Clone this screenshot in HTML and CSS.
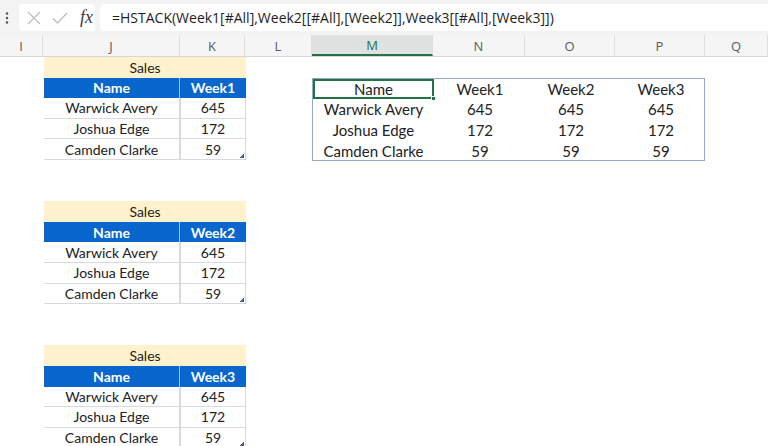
FILE: index.html
```html
<!DOCTYPE html>
<html lang="en">

<head>
    <meta charset="UTF-8">
    <meta name="viewport" content="width=device-width, initial-scale=1.0">
    <title>HSTACK</title>

    <link rel="stylesheet" href="styles.css">
</head>

<body>
    <div class="toolbar">
        <svg class="dots" viewBox="0 0 4 12" width="4" height="12">
            <circle cx="2" cy="1.5" r="1.2" />
            <circle cx="2" cy="6" r="1.2" />
            <circle cx="2" cy="10.5" r="1.2" />
        </svg>
        <div class="fx-box">
            <svg class="icon" viewBox="0 0 16 16" width="16" height="16">
                <path d="M2 2 L14 14 M14 2 L2 14" />
            </svg>
            <svg class="icon" viewBox="0 0 16 16" width="16" height="16">
                <path d="M1 8.5 L5.5 13 L15 3" />
            </svg>
            <span class="fx">fx</span>
        </div>
        <div class="formula">=HSTACK(Week1[#All],Week2[[#All],[Week2]],Week3[[#All],[Week3]])</div>
    </div>

    <div class="col-heads">
        <div class="col-head">I</div>
        <div class="col-head">J</div>
        <div class="col-head">K</div>
        <div class="col-head">L</div>
        <div class="col-head active">M</div>
        <div class="col-head">N</div>
        <div class="col-head">O</div>
        <div class="col-head">P</div>
        <div class="col-head">Q</div>
    </div>

    <div class="sheet">
        <div class="table table-1">
            <div class="cell title">Sales</div>
            <div class="cell head">Name</div>
            <div class="cell head">Week1</div>
            <div class="cell">Warwick Avery</div>
            <div class="cell">645</div>
            <div class="cell">Joshua Edge</div>
            <div class="cell">172</div>
            <div class="cell">Camden Clarke</div>
            <div class="cell">59</div>
            <span class="resize"></span>
        </div>

        <div class="table table-2">
            <div class="cell title">Sales</div>
            <div class="cell head">Name</div>
            <div class="cell head">Week2</div>
            <div class="cell">Warwick Avery</div>
            <div class="cell">645</div>
            <div class="cell">Joshua Edge</div>
            <div class="cell">172</div>
            <div class="cell">Camden Clarke</div>
            <div class="cell">59</div>
            <span class="resize"></span>
        </div>

        <div class="table table-3">
            <div class="cell title">Sales</div>
            <div class="cell head">Name</div>
            <div class="cell head">Week3</div>
            <div class="cell">Warwick Avery</div>
            <div class="cell">645</div>
            <div class="cell">Joshua Edge</div>
            <div class="cell">172</div>
            <div class="cell">Camden Clarke</div>
            <div class="cell">59</div>
            <span class="resize"></span>
        </div>

        <div class="spill">
            <div class="val selected">Name<span class="handle"></span></div>
            <div class="val">Week1</div>
            <div class="val">Week2</div>
            <div class="val">Week3</div>
            <div class="val">Warwick Avery</div>
            <div class="val">645</div>
            <div class="val">645</div>
            <div class="val">645</div>
            <div class="val">Joshua Edge</div>
            <div class="val">172</div>
            <div class="val">172</div>
            <div class="val">172</div>
            <div class="val">Camden Clarke</div>
            <div class="val">59</div>
            <div class="val">59</div>
            <div class="val">59</div>
        </div>
    </div>
</body>

</html>
```

FILE: styles.css
```css
* {
    --green: rgb(33, 115, 70);
    --blue: rgb(8, 102, 204);
    --cols: 43px 137px 65px 67px 121px 92px 90px 90px 1fr;
    --row: 20.6px;
    box-sizing: border-box;
}

body {
    background-color: white;
    margin: 0;
    overflow: hidden;
    font-family: Lato, "Liberation Sans", sans-serif;
    color: rgb(34, 34, 34);
}

/* formula bar */

.toolbar {
    display: flex;
    align-items: center;
    height: 35px;
    padding: 4px 0 4px 5px;
    background-color: rgb(243, 243, 243);
}

.dots {
    fill: rgb(80, 80, 80);
    margin-right: 10px;
}

.fx-box {
    display: flex;
    align-items: center;
    gap: 10px;
    height: 27px;
    width: 76px;
    padding-left: 7px;
    background-color: white;
    border-radius: 4px;
    margin-right: 5px;
}

.icon {
    fill: none;
    stroke: rgb(190, 190, 190);
    stroke-width: 1.3;
}

.fx {
    font-family: "Liberation Serif", serif;
    font-style: italic;
    font-size: 18px;
    color: rgb(60, 60, 60);
    margin-left: 2px;
}

.formula {
    flex: 1;
    height: 27px;
    display: flex;
    align-items: center;
    padding-left: 12px;
    background-color: white;
    border-radius: 4px 0 0 4px;
    font-family: "Open Sans", sans-serif;
    font-size: 14px;
    color: rgb(30, 30, 30);
    white-space: nowrap;
}

/* column headers */

.col-heads {
    display: grid;
    grid-template-columns: var(--cols);
    height: 22px;
    background-color: rgb(245, 245, 245);
    border-bottom: 1px solid rgb(215, 215, 215);
}

.col-head {
    display: flex;
    align-items: center;
    justify-content: center;
    font-family: "Open Sans", sans-serif;
    font-size: 13px;
    color: rgb(90, 90, 90);
    border-right: 1px solid rgb(222, 222, 222);
}

.col-head.active {
    background-color: rgb(224, 226, 225);
    color: var(--green);
    border-bottom: 2px solid var(--green);
}

/* sheet */

.sheet {
    display: grid;
    grid-template-columns: var(--cols);
    grid-auto-rows: var(--row);
}

.table {
    position: relative;
    display: grid;
    grid-template-columns: 136px 66px;
    grid-auto-rows: var(--row);
    grid-column: 2 / span 2;
    grid-row-end: span 5;
    margin-left: 1px;
    font-size: 14px;
}

.table-1 {
    grid-row-start: 1;
}

.table-2 {
    grid-row-start: 8;
}

.table-3 {
    grid-row-start: 15;
}

.cell {
    display: flex;
    align-items: center;
    justify-content: center;
    border-right: 1px solid rgb(214, 218, 224);
    border-bottom: 1px solid rgb(214, 218, 224);
}

.cell:nth-child(odd) {
    border-left: 1px solid rgb(214, 218, 224);
}

.cell.title {
    grid-column: 1 / span 2;
    background-color: rgb(255, 242, 204);
    border: none;
}

.cell.head {
    background-color: var(--blue);
    color: white;
    font-weight: 700;
    border-left: none;
    border-bottom: none;
    border-right: 1px solid rgb(170, 200, 235);
}

.cell.head + .cell.head {
    border-right: none;
}

.resize {
    position: absolute;
    right: 1px;
    bottom: 2px;
    width: 4px;
    height: 4px;
    background: linear-gradient(135deg, transparent 50%, rgb(70, 90, 130) 50%);
}

.spill {
    display: grid;
    grid-template-columns: 121px 92px 90px 90px;
    grid-auto-rows: var(--row);
    grid-column: 5 / span 4;
    grid-row: 2 / span 4;
    height: calc(var(--row) * 4 + 1px);
    border: 1px solid rgb(150, 168, 196);
    font-size: 15px;
}

.val {
    display: flex;
    align-items: center;
    justify-content: center;
}

.val.selected {
    position: relative;
    border: 2px solid var(--green);
}

.handle {
    position: absolute;
    right: -4px;
    bottom: -4px;
    width: 5px;
    height: 5px;
    background-color: var(--green);
    border: 1px solid white;
}
```
